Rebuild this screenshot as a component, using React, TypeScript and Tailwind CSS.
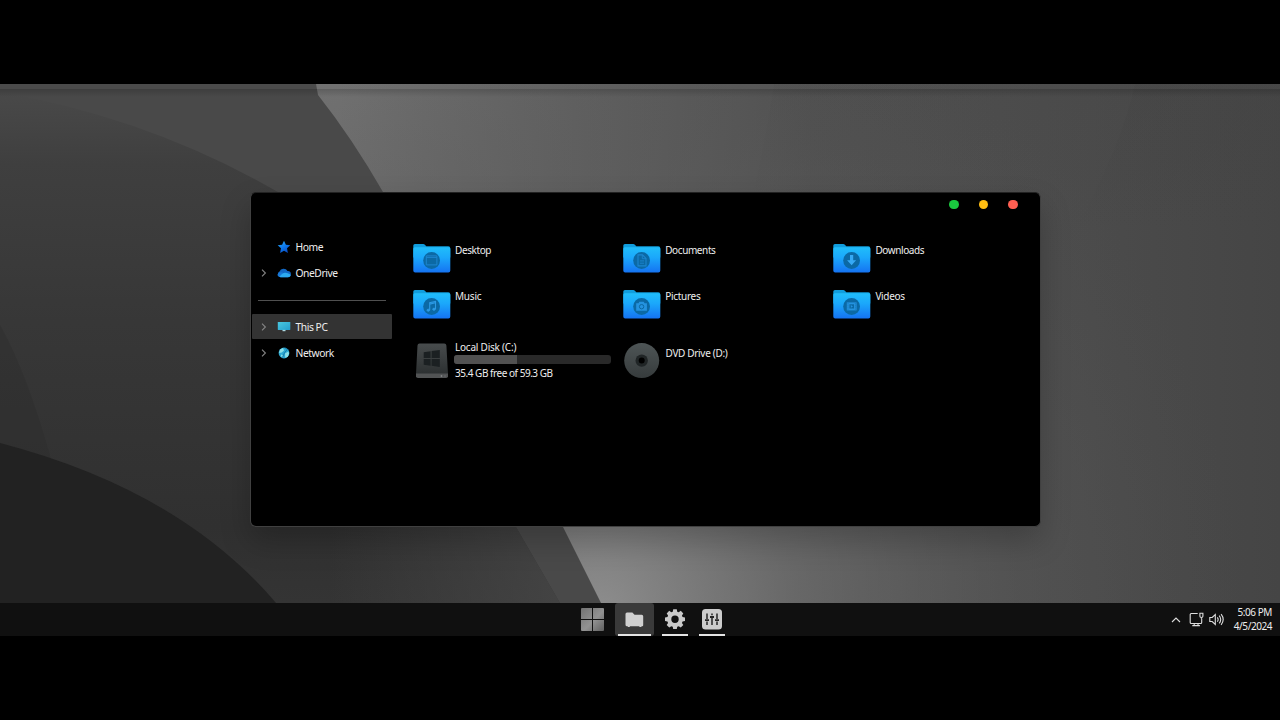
import type { ReactNode } from 'react';

type FolderName = 'Desktop' | 'Documents' | 'Downloads' | 'Music' | 'Pictures' | 'Videos';

const folders: { name: FolderName; className: string }[] = [
  { name: 'Desktop', className: 'tracking-[-0.4px]' },
  { name: 'Documents', className: 'tracking-[-0.4px]' },
  { name: 'Downloads', className: 'tracking-[-0.4px]' },
  { name: 'Music', className: 'tracking-[-0.2px]' },
  { name: 'Pictures', className: 'tracking-[-0.3px]' },
  { name: 'Videos', className: 'tracking-[-0.3px]' },
];

function Wallpaper() {
  return (
    <svg className="absolute inset-0 w-full h-full" viewBox="0 84 1280 519" preserveAspectRatio="none">
      <defs>
        <linearGradient id="wallLight" gradientUnits="userSpaceOnUse" x1="340" y1="0" x2="1280" y2="0">
          <stop offset="0" stopColor="#737373" />
          <stop offset="0.18" stopColor="#676767" />
          <stop offset="0.36" stopColor="#5a5a5a" />
          <stop offset="0.5" stopColor="#515151" />
          <stop offset="0.8" stopColor="#4b4b4b" />
          <stop offset="1" stopColor="#454545" />
        </linearGradient>
        <radialGradient id="wallGlow" gradientUnits="userSpaceOnUse" cx="600" cy="610" r="640">
          <stop offset="0" stopColor="#959595" stopOpacity="0.85" />
          <stop offset="0.3" stopColor="#747474" stopOpacity="0.65" />
          <stop offset="0.65" stopColor="#5a5a5a" stopOpacity="0.4" />
          <stop offset="1" stopColor="#505050" stopOpacity="0" />
        </radialGradient>
        <linearGradient id="wallFacet" gradientUnits="userSpaceOnUse" x1="0" y1="84" x2="0" y2="230">
          <stop offset="0" stopColor="#444" stopOpacity="0.4" />
          <stop offset="1" stopColor="#444" stopOpacity="0" />
        </linearGradient>
        <linearGradient id="wallDark" gradientUnits="userSpaceOnUse" x1="0" y1="92" x2="0" y2="603">
          <stop offset="0" stopColor="#494949" />
          <stop offset="0.14" stopColor="#3f3f3f" />
          <stop offset="0.45" stopColor="#373737" />
          <stop offset="0.85" stopColor="#303030" />
          <stop offset="1" stopColor="#343434" />
        </linearGradient>
        <linearGradient id="wallEdge" gradientUnits="userSpaceOnUse" x1="330" y1="0" x2="560" y2="0">
          <stop offset="0" stopColor="#464646" stopOpacity="0" />
          <stop offset="1" stopColor="#464646" stopOpacity="0.85" />
        </linearGradient>
        <linearGradient id="wallTop" x1="0" y1="0" x2="0" y2="1">
          <stop offset="0" stopColor="#000" stopOpacity="0.16" />
          <stop offset="1" stopColor="#000" stopOpacity="0" />
        </linearGradient>
      </defs>
      <rect x="0" y="84" width="1280" height="519" fill="url(#wallLight)" />
      <path d="M1135 84Q1120 150 1075 230H1280V84Z" fill="url(#wallFacet)" />
      <path d="M774 84Q765 145 745 230H1280V84Z" fill="url(#wallFacet)" opacity="0.35" />
      <rect x="0" y="84" width="1280" height="519" fill="url(#wallGlow)" />
      <path d="M0 84H316L318 95Q352 138 383 192Q490 360 563 527L601 603H0Z" fill="#494949" />
      <path d="M0 92Q150 118 278 192Q435 300 516 527L560 603H0Z" fill="url(#wallDark)" />
      <path d="M330 225Q450 330 516 527L560 603H330Z" fill="url(#wallEdge)" />
      <path d="M0 325Q28 375 52 463L0 443Z" fill="#2b2b2b" opacity="0.35" />
      <path d="M0 443Q180 490 276 603H0Z" fill="#222222" />
      <rect x="0" y="84" width="1280" height="5" fill="#fff" opacity="0.01" />
      <rect x="0" y="89" width="1280" height="8" fill="url(#wallTop)" />
    </svg>
  );
}

/* Glyph drawn in the round badge of each library folder, 37x29 space */
function FolderGlyph({ name }: { name: FolderName }) {
  const blue = '#1c86cf';
  switch (name) {
    case 'Desktop':
      return <path d="M13.3 12.5h10.6v9H13.3zM13.3 14h10.6" fill="none" stroke={blue} strokeWidth="1" />;
    case 'Documents':
      return (
        <>
          <path d="M15 11.5h4.5l3.5 3.5v7.5h-8z" fill="none" stroke={blue} strokeWidth="1.1" />
          <path d="M19.3 11.5v3.8H23M17 17.5h4M17 19.8h4" fill="none" stroke={blue} strokeWidth="0.9" />
        </>
      );
    case 'Downloads':
      return <path d="M17 11.7h3.2v5.2h2.9l-4.5 5-4.5-5H17z" fill="#36a9f5" />;
    case 'Music':
      return (
        <g fill="#2b9ae6" stroke="#2b9ae6">
          <ellipse cx="15.3" cy="20.8" rx="1.3" ry="1" />
          <ellipse cx="21" cy="19.8" rx="1.3" ry="1" />
          <path d="M16.7 20.7v-7.4l5.8-1.3v7.6M16.7 14.7l5.8-1.3" fill="none" strokeWidth="1.1" />
        </g>
      );
    case 'Pictures':
      return (
        <>
          <path d="M13.2 13.8h2.3l.9-1.5h4.3l.9 1.5h2.3v7.5H13.2z" fill="#2493e0" />
          <circle cx="18.6" cy="17.3" r="2.2" fill="none" stroke="#0b69a5" strokeWidth="1" />
        </>
      );
    case 'Videos':
      return (
        <>
          <path d="M13.8 13h9.8v8h-9.8z" fill="#2493e0" />
          <path d="M16.4 14.9h4.6v4.2h-4.6z" fill="#0b69a5" />
          <path d="M17.8 15.6l2.2 1.4-2.2 1.4z" fill="#2493e0" />
          <path d="M15 14v6.5M22.4 14v6.5" stroke="#0b69a5" strokeWidth="0.7" strokeDasharray="1 1" />
        </>
      );
  }
}

function FolderIcon({ name }: { name: FolderName }) {
  return (
    <svg className="w-[38px] h-[30px] shrink-0" viewBox="0 -0.4 38 30">
      <defs>
        <linearGradient id={`folder${name}`} x1="0" y1="0" x2="0" y2="1">
          <stop offset="0" stopColor="#20bdfa" />
          <stop offset="0.4" stopColor="#1ba8fb" />
          <stop offset="1" stopColor="#1573f2" />
        </linearGradient>
      </defs>
      <path d="M.3 2.1Q.3.5 1.9.5h8.3q1 0 1.7.8l1.4 1.6h22q2 0 2 2V14H.3z" fill="#119ddd" />
      <path d="M.3 5.4q0-1.5 1.6-1.5h33.8q1.6 0 1.6 1.5v21.8q0 1.9-1.9 1.9H2.2q-1.9 0-1.9-1.9z" fill={`url(#folder${name})`} />
      <circle cx="18.6" cy="17.1" r="8.4" fill="#0b69a5" />
      <FolderGlyph name={name} />
    </svg>
  );
}

function DiskIcon() {
  return (
    <svg className="w-[34px] h-9 shrink-0" viewBox="0 0 34 36">
      <defs>
        <linearGradient id="diskBody" x1="0" y1="0" x2="0" y2="1">
          <stop offset="0" stopColor="#484c4d" />
          <stop offset="1" stopColor="#2c3031" />
        </linearGradient>
      </defs>
      <path d="M4.5.5h24.7q2 0 2.2 2L33 31H1L2.5 2.5q.1-2 2-2z" fill="url(#diskBody)" />
      <path d="M1 30.5h32v2.7q0 1.8-2 1.8H3q-2 0-2-1.8z" fill="#515354" />
      <path d="M8.7 9.2l6.9-1v6.8H8.7zM16.6 8l8.2-1.1V15h-8.2zM8.7 16h6.9v6.7l-6.9-1zM16.6 16h8.2v8l-8.2-1.2z" fill="#1b2022" />
      <circle cx="26.5" cy="33" r="0.9" fill="#828485" />
      <circle cx="30" cy="33" r="0.8" fill="#6c6f70" />
    </svg>
  );
}

function DiscIcon() {
  return (
    <svg className="w-9 h-9 shrink-0" viewBox="0 0 36 36">
      <defs>
        <linearGradient id="discBody" x1="0" y1="0" x2="0" y2="1">
          <stop offset="0" stopColor="#4e5556" />
          <stop offset="1" stopColor="#363b3c" />
        </linearGradient>
      </defs>
      <circle cx="17.7" cy="17.6" r="17.5" fill="url(#discBody)" />
      <circle cx="17.7" cy="17.6" r="6.2" fill="#202526" />
      <circle cx="17.7" cy="17.6" r="3" fill="#000" />
    </svg>
  );
}

function StarIcon() {
  return (
    <svg className="w-3.5 h-3.5" viewBox="0 0 14 14">
      <defs>
        <linearGradient id="star" x1="0" y1="0" x2="0.6" y2="1">
          <stop offset="0" stopColor="#2bb0fa" />
          <stop offset="0.6" stopColor="#0c75ea" />
          <stop offset="1" stopColor="#0b4fc4" />
        </linearGradient>
      </defs>
      <path d="M7 .8l1.9 4 4.4.5-3.3 3 .9 4.7L7 10.8 3.1 13 4 8.3l-3.3-3 4.4-.5z" fill="url(#star)" />
    </svg>
  );
}

function CloudIcon() {
  return (
    <svg className="w-3.5 h-3.5" viewBox="0 0 14 14">
      <path d="M3.6 11.2A3 3 0 0 1 2.5 5.6 4.4 4.4 0 0 1 10.5 5a3.1 3.1 0 0 1 .6 6.2z" fill="#1268c5" />
      <path d="M2.6 11.1Q.2 10.5.5 8.6 1 6.2 4 6.2q1.4 0 2.4.8l-4 4z" fill="#1979d8" />
      <path d="M2.4 10.8Q5.5 7 8 6.8q1.4-.1 2.8.4 3 .8 2.8 2.3-.2 1.7-2.5 1.7H3.6q-.8 0-1.2-.4z" fill="#2caaf1" />
    </svg>
  );
}

function MonitorIcon() {
  return (
    <svg className="w-3.5 h-3.5" viewBox="0 0 14 14">
      <defs>
        <linearGradient id="monitor" x1="0" y1="0" x2="1" y2="1">
          <stop offset="0" stopColor="#4bc8df" />
          <stop offset="1" stopColor="#249fcf" />
        </linearGradient>
      </defs>
      <path d="M1.2 2h11.7q.4 0 .4.4v7.1q0 .4-.4.4H1.2q-.4 0-.4-.4V2.4q0-.4.4-.4z" fill="url(#monitor)" />
      <path d="M5.5 9.9h3v1.3h-3z" fill="#acd9e2" />
    </svg>
  );
}

function GlobeIcon() {
  return (
    <svg className="w-3.5 h-3.5" viewBox="0 0 14 14">
      <circle cx="7" cy="7" r="5.4" fill="#2ba9d3" />
      <path d="M3 3.5L6 2l1 2.4-2.2 2.1-2.7.4zM8 7.5l3.3-2 .8 2-1.3 3.2-2.6 1zM4 8.5l2 .7-.3 2.4-1.6-1z" fill="#8be0e8" />
      <path d="M8 2l2.4 1.3-2.8 3.3-2.2 4.9" fill="none" stroke="#1477a8" strokeWidth="0.9" />
    </svg>
  );
}

function SideItem({
  icon,
  label,
  expandable = true,
  active = false,
}: {
  icon: ReactNode;
  label: string;
  expandable?: boolean;
  active?: boolean;
}) {
  return (
    <div className={`flex items-center w-[140px] pl-2 rounded-[1px] ${active ? 'h-[25px] bg-[#333333]' : 'h-[26px]'}`}>
      <svg className="w-2 h-2.5" viewBox="0 0 8 10">
        {expandable && <path d="M2 1.7L5.4 5 2 8.3" fill="none" stroke="#858585" strokeWidth="1.1" />}
      </svg>
      <span className="ml-[9px]">{icon}</span>
      <span className="ml-[4.5px] text-[10.3px] leading-3 tracking-[-0.45px] whitespace-nowrap">{label}</span>
    </div>
  );
}

function ExplorerWindow() {
  return (
    <div className="relative flex flex-col w-[791px] h-[335px] bg-black rounded-md border border-[#404040] border-t-[#222222] shadow-[0_14px_30px_rgba(0,0,0,0.22)]">
      <div className="flex justify-end gap-5 h-6 pt-[6.5px] pr-[22.5px]">
        <span className="w-[9.5px] h-[9.5px] rounded-full bg-[#1ac93f]" />
        <span className="w-[9.5px] h-[9.5px] rounded-full bg-[#ffbd12]" />
        <span className="w-[9.5px] h-[9.5px] rounded-full bg-[#ff5f52]" />
      </div>

      <div className="flex flex-1 text-[#eeeeee]">
        {/* Navigation pane */}
        <nav className="w-[162px] shrink-0 pl-px pt-[17px]">
          <SideItem icon={<StarIcon />} label="Home" expandable={false} />
          <SideItem icon={<CloudIcon />} label="OneDrive" />
          <div className="w-[128px] h-px bg-[#505050] ml-1.5 mt-3.5 mb-[13px]" />
          <SideItem icon={<MonitorIcon />} label="This PC" active />
          <div className="h-px" />
          <SideItem icon={<GlobeIcon />} label="Network" />
        </nav>

        <main className="flex-1 pt-[26px] text-[10px] leading-3">
          <div className="grid grid-cols-[repeat(3,210.2px)] auto-rows-[46.3px]">
            {folders.map(({ name, className }) => (
              <div key={name} className="flex gap-1">
                <FolderIcon name={name} />
                <span className={`pt-px ${className}`}>{name}</span>
              </div>
            ))}
          </div>

          {/* Drives */}
          <div className="flex pt-[7px]">
            <div className="flex gap-[5px] w-[210px] pl-[1.5px]">
              <DiskIcon />
              <div className="-mt-[2px]">
                <div className="pl-[1.5px] whitespace-nowrap tracking-[-0.22px]">Local Disk (C:)</div>
                <div className="w-[157px] h-[9px] mt-[2px] rounded-[3px] bg-[#292929] overflow-hidden">
                  <div className="h-full bg-[#515151]" style={{ width: `${((59.3 - 35.4) / 59.3) * 100}%` }} />
                </div>
                <div className="pl-[1.5px] mt-[3px] whitespace-nowrap tracking-[-0.47px]">35.4 GB free of 59.3 GB</div>
              </div>
            </div>
            <div className="flex gap-[6px] pl-[0.5px]">
              <DiscIcon />
              <span className="pt-1 tracking-[-0.32px]">DVD Drive (D:)</span>
            </div>
          </div>
        </main>
      </div>
    </div>
  );
}

function Taskbar() {
  return (
    <footer className="relative flex items-stretch h-[33px] bg-[#101010]">
      <div className="flex flex-1 pl-[581px]">
        <svg className="w-[23px] h-[23px] mt-[5px]" viewBox="0 0 23 23">
          <defs>
            <linearGradient id="start" x1="0" y1="0" x2="1" y2="1">
              <stop offset="0" stopColor="#737373" />
              <stop offset="0.55" stopColor="#929292" />
              <stop offset="1" stopColor="#606060" />
            </linearGradient>
          </defs>
          <path
            d="M1 0h10v11H0V1q0-1 1-1zM12 0h10q1 0 1 1v10H12zM0 12h11v11H1q-1 0-1-1zM12 12h11v10q0 1-1 1H12z"
            fill="url(#start)"
          />
        </svg>
        <div className="flex flex-col items-center justify-end w-[39px] ml-[10.5px] bg-[#3a3a3a] rounded-[3px]">
          <svg className="w-[19px] h-4 mb-[6px]" viewBox="0 0 19 16">
            <path d="M.5 2q0-1.5 1.5-1.5h5.4l2.1 2.2h7.2q1.5 0 1.5 1.5v9q0 1-1 1h-.8v.8h-2v-.8H4.8v.8h-2v-.8h-.8q-1.5 0-1.5-1.5z" fill="#d0d0d0" />
          </svg>
          <span className="w-[33px] h-[2px] bg-[#e4e4e4]" />
        </div>
        <div className="flex flex-col items-center justify-end w-[27px] ml-[7.5px]">
          <svg className="w-5 h-5 mb-[5px]" viewBox="0 0 24 24">
            <path
              fill="#c9c9c9"
              fillRule="evenodd"
              d="M9.7 0h4.6l.6 3.2 1.9.8 2.7-1.8 3.3 3.3L21 8.2l.8 1.9 3.2.6v4.6l-3.2.6-.8 1.9 1.8 2.7-3.3 3.3-2.7-1.8-1.9.8-.6 3.2H9.7l-.6-3.2-1.9-.8-2.7 1.8-3.3-3.3L3 17.8l-.8-1.9-3.2-.6v-4.6l3.2-.6L3 8.2 1.2 5.5l3.3-3.3L7.2 4l1.9-.8zM12 8.2a4.8 4.8 0 1 0 0 9.6 4.8 4.8 0 1 0 0-9.6z"
              transform="translate(.9 .2) scale(.925)"
            />
          </svg>
          <span className="w-[26px] h-[2px] bg-[#e4e4e4]" />
        </div>
        <div className="flex flex-col items-center justify-end w-[27px] ml-[10px]">
          <svg className="w-5 h-[21px] mb-1" viewBox="0 0 20 21">
            <rect width="20" height="20.5" rx="3.5" fill="#cccccc" />
            <path d="M5 4.5V10M5 12.5V16M10 4.5V6.2M10 9V16M15 4.5V10M15 12.5V16" stroke="#242424" strokeWidth="1.5" />
            <path d="M3 11.2h4M8 8h4M13 11.2h4" stroke="#242424" strokeWidth="1.8" />
          </svg>
          <span className="w-[26px] h-[2px] bg-[#e4e4e4]" />
        </div>
      </div>

      {/* System tray */}
      <div className="flex items-center shrink-0 text-[#eeeeee]">
        <svg className="w-2.5 h-2.5" viewBox="0 0 10 10">
          <path d="M1 7l4-4 4 4" fill="none" stroke="#dddddd" strokeWidth="1.1" />
        </svg>
        <svg className="w-[15px] h-[15px] ml-2" viewBox="0 0 15 15" fill="none" stroke="#dddddd" strokeWidth="1.1">
          <path d="M8.7 1.5H2.2q-1 0-1 1v8q0 1 1 1h9.5q1 0 1-1V6.5M3.3 13.6h7.6M5.2 11.5v2M9 11.5v2" />
          <path d="M10.9 1.2h3v3q0 1-1.5 1.3-1.5-.3-1.5-1.3zM12.4 5.3v1.5" />
        </svg>
        <svg className="w-[15px] h-[15px] ml-[5px]" viewBox="0 0 15 15" fill="none" stroke="#dddddd" strokeWidth="1.1">
          <path d="M.8 5.5h2.4l3.1-3v10l-3.1-3H.8zM8.3 5.3q1.7 2.2 0 4.4M10.2 3.6q3 3.9 0 7.8M12.1 2.2q4.2 5.3 0 10.6" />
        </svg>
        <div className="flex flex-col items-end w-14 pr-2 pb-px text-[10px] leading-[14px] tracking-[-0.45px] whitespace-nowrap">
          <span>5:06 PM</span>
          <span>4/5/2024</span>
        </div>
      </div>
    </footer>
  );
}

export default function App() {
  return (
    <div className="w-[1280px] h-[720px] bg-black pt-[84px] overflow-hidden font-['Noto_Sans','Open_Sans',sans-serif]">
      <div className="relative h-[519px] pl-[250px] pt-[108px] overflow-hidden">
        <Wallpaper />
        <ExplorerWindow />
      </div>
      <Taskbar />
    </div>
  );
}
